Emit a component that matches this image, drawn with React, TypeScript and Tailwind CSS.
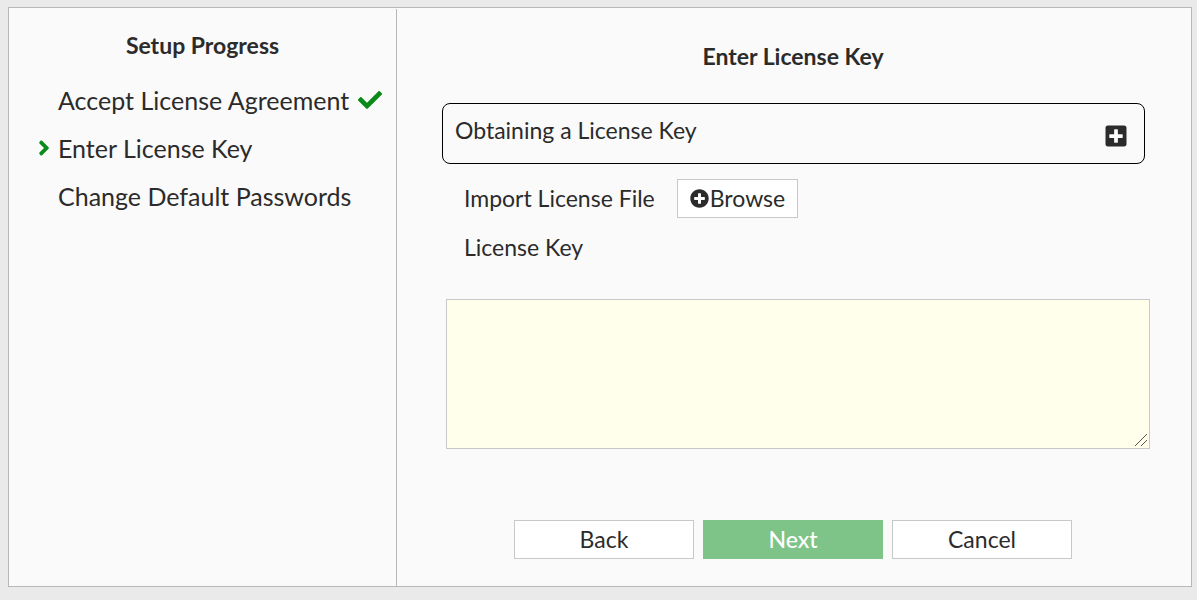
import { useState } from 'react'
import type { FC } from 'react'
import { FaAngleRight, FaCheck, FaMinusSquare, FaPlusCircle, FaPlusSquare } from 'react-icons/fa'

interface Step {
  label: string
  status: 'done' | 'current' | 'pending'
}

const steps: Step[] = [
  { label: 'Accept License Agreement', status: 'done' },
  { label: 'Enter License Key', status: 'current' },
  { label: 'Change Default Passwords', status: 'pending' },
]

const buttonClass = 'h-[39px] w-[180px] border border-[#c8c8c8] bg-white pb-[2px]'

const SetupProgress: FC = () => (
  <aside className="mt-px w-[388px] shrink-0 border-r border-[#b8b8b8] pt-5">
    <h2 className="text-center leading-8 font-bold">Setup Progress</h2>
    <ol className="mt-[15px] flex flex-col text-[25px] leading-[48px]">
      {steps.map((step) => (
        <li
          key={step.label}
          className="flex items-center"
          aria-current={step.status === 'current' ? 'step' : undefined}
        >
          <span className="flex w-[49px] shrink-0 justify-end pr-[2px] text-[#0a8a18]">
            {step.status === 'current' && <FaAngleRight size={24} />}
          </span>
          {step.label}
          {step.status === 'done' && <FaCheck size={24} className="ml-[9px] text-[#0a8a18]" />}
        </li>
      ))}
    </ol>
  </aside>
)

const LicenseForm: FC = () => {
  const [licenseKey, setLicenseKey] = useState('')
  const [helpOpen, setHelpOpen] = useState(false)

  return (
    <main className="flex min-w-0 flex-1 flex-col pt-8 pr-[41px] pb-[27px] pl-[45px]">
      <h1 className="mr-[6px] text-center leading-8 font-bold">Enter License Key</h1>

      <section className="mt-[31px] mr-[5px] rounded-lg border border-black">
        <button
          type="button"
          className="flex h-[59px] w-full items-start justify-between pr-4 pl-3 text-left"
          aria-expanded={helpOpen}
          onClick={() => setHelpOpen(!helpOpen)}
        >
          <span className="pt-[10px] leading-8">Obtaining a License Key</span>
          {helpOpen ? <FaMinusSquare size={24} className="mt-5" /> : <FaPlusSquare size={24} className="mt-5" />}
        </button>
        {helpOpen && <p className="px-3 pb-4">Contact your sales representative to obtain a license key.</p>}
      </section>

      <div className="mt-[15px] flex items-center gap-[22px] pl-[22px]">
        <span id="import-label" className="pb-[2px]">Import License File</span>
        <button
          type="button"
          aria-describedby="import-label"
          className="flex h-[39px] items-center gap-px border border-[#c8c8c8] bg-white px-3"
        >
          <FaPlusCircle size={19} />
          <span className="pb-[2px]">Browse</span>
        </button>
      </div>

      <label htmlFor="license-key" className="mt-[13px] pl-[22px] leading-8">
        License Key
      </label>
      <div className="relative mt-9 ml-1 flex">
        <textarea
          id="license-key"
          value={licenseKey}
          onChange={(e) => setLicenseKey(e.target.value)}
          className="h-[150px] w-full resize border border-[#c8c8c8] bg-[#ffffeb] p-2 outline-none [&::-webkit-resizer]:bg-transparent"
        />
        {/* resize grip */}
        <svg
          viewBox="0 0 14 14"
          className="pointer-events-none absolute right-[2px] bottom-[2px] size-[14px]"
          stroke="#555"
          fill="none"
          aria-hidden="true"
        >
          <path d="M1 13 13 1M7 13l6-6" />
        </svg>
      </div>

      <div className="mt-auto mr-[6px] flex justify-center gap-[9px]">
        <button type="button" className={buttonClass}>Back</button>
        <button type="submit" className="h-[39px] w-[180px] bg-[#7ec488] pb-[2px] font-medium text-white">Next</button>
        <button type="button" className={buttonClass}>Cancel</button>
      </div>
    </main>
  )
}

const App: FC = () => (
  <div className="flex min-h-screen bg-[#eaeaea] pt-[7px] pr-[5px] pb-[13px] pl-2 font-[Lato,'Open_Sans',sans-serif] text-[23px] leading-8 text-[#2b2b2b]">
    <div className="flex flex-1 border border-[#b8b8b8] bg-[#fafafa]">
      <SetupProgress />
      <LicenseForm />
    </div>
  </div>
)

export default App
